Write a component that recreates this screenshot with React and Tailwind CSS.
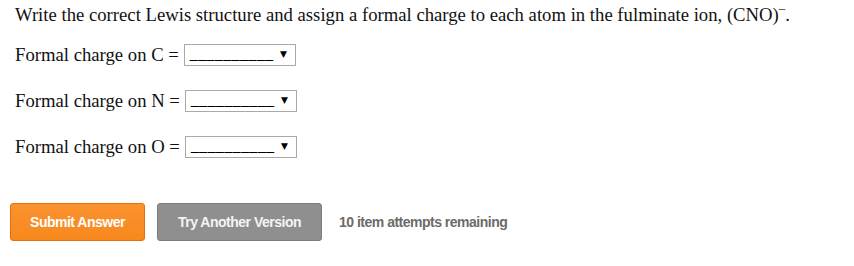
import React from 'react';

const Blank = () => (
    <div className="inline-flex items-center w-[112px] h-[22px] border border-[#a9a9a9] bg-white ml-[5px] pl-[5px] pr-[8px] justify-between">
        <span className="font-['Liberation_Sans',sans-serif] text-[14px] leading-none text-black tracking-[0.6px] -mt-[4px]">__________</span>
        <span className="text-[9px] leading-none text-black font-['DejaVu_Sans',sans-serif] -mt-[2px]">▼</span>
    </div>
);

const App = () => {
    const atoms = ['C', 'N', 'O'];

    return (
        <div className="bg-white w-[854px] h-[266px] font-['Liberation_Serif',serif] text-[#111]">
            <p className="pl-[15px] pt-[2px] text-[18.7px] leading-[26px]">
                Write the correct Lewis structure and assign a formal charge to each atom in the fulminate ion, (CNO)<span className="relative -top-[9px] text-[13px]">–</span>.
            </p>

            {/* formal charge rows */}
            <div className="pl-[15px] pt-[14px] flex flex-col gap-[24px]">
                {atoms.map((a) => (
                    <div key={a} className="flex items-center h-[22px] text-[18.7px]">
                        <span>Formal charge on {a} =</span>
                        <Blank />
                    </div>
                ))}
            </div>

            {/* actions */}
            <div className="flex items-center pl-[10px] pt-[45px] font-['Liberation_Sans',sans-serif] font-bold text-[14px] tracking-[-0.5px]">
                <button className="w-[135px] h-[38px] rounded-[3px] border border-[#e3700a] bg-gradient-to-b from-[#fa922f] to-[#f7891c] text-white">
                    Submit Answer
                </button>
                <button className="ml-[12px] w-[165px] h-[38px] rounded-[3px] border border-[#7d7d7d] bg-[#8f8f8f] text-[#f4f4f4]">
                    Try Another Version
                </button>
                <span className="ml-[17px] text-[#6b6b6b]">10 item attempts remaining</span>
            </div>
        </div>
    );
};

export default App;
